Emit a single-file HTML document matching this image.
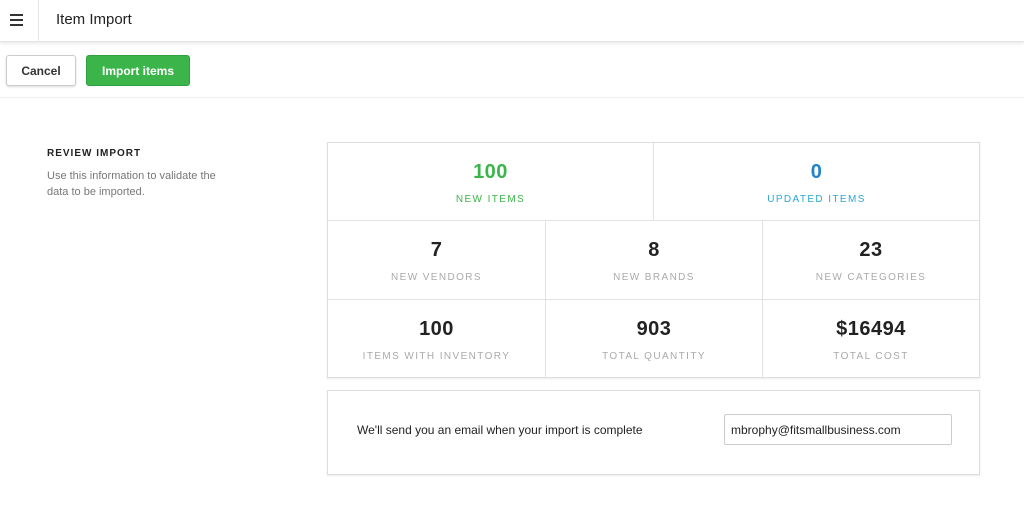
<!DOCTYPE html>
<html><head><style>
*{box-sizing:border-box;margin:0;padding:0}
body{width:1024px;height:505px;background:#fff;font-family:"Liberation Sans",sans-serif;position:relative;overflow:hidden;color:#222}
.top{position:absolute;left:0;top:0;width:1024px;height:42px;border-bottom:1px solid #e4e4e4;box-shadow:0 2px 3px rgba(0,0,0,.08)}
.hb{position:absolute;left:0;top:0;width:39px;height:42px;border-right:1px solid #e6e6e6}
.hb i{position:absolute;left:10px;width:13px;height:2px;background:#333}
.title{position:absolute;left:56px;top:11px;font-size:15px;color:#222}
.btn{position:absolute;top:55px;height:31px;border-radius:3px;font-size:12px;font-weight:bold;text-align:center;line-height:31px}
.cancel{left:6px;width:70px;border:1px solid #ccc;color:#333;background:#fff;box-shadow:0 1px 2px rgba(0,0,0,.15)}
.imp{left:86px;width:104px;background:#3bb54a;color:#fff;border:1px solid #2fa03f}
.sep{position:absolute;left:0;top:97px;width:1024px;height:1px;background:#eee}
.h{position:absolute;left:47px;top:148px;font-size:10px;font-weight:bold;letter-spacing:1px;color:#222}
.d{position:absolute;left:47px;top:168px;font-size:11px;line-height:16px;color:#777;width:192px}
.card{position:absolute;left:327px;top:142px;width:653px;height:236px;border:1px solid #ddd;box-shadow:0 1px 2px rgba(0,0,0,.08)}
.c{position:absolute;text-align:center;border-color:#e2e2e2;border-style:solid;border-width:0}
.n{font-size:20px;font-weight:bold;margin-top:18px;letter-spacing:.5px}
.l{font-size:10px;letter-spacing:1.4px;color:#aaa;margin-top:10px}
.email{position:absolute;left:327px;top:390px;width:653px;height:85px;border:1px solid #ddd;box-shadow:0 1px 2px rgba(0,0,0,.08)}
.et{position:absolute;left:29px;top:32px;font-size:12px;color:#222}
.inp{position:absolute;left:396px;top:23px;width:228px;height:31px;border:1px solid #ccc;border-radius:2px;font-size:12px;padding:8px 6px;color:#222}
</style></head><body>
<div class="top"><div class="hb"><i style="top:14px"></i><i style="top:19px"></i><i style="top:24px"></i></div><div class="title">Item Import</div></div>
<div class="btn cancel">Cancel</div><div class="btn imp">Import items</div>
<div class="sep"></div>
<div class="h">REVIEW IMPORT</div>
<div class="d">Use this information to validate the data to be imported.</div>
<div class="card">
<div class="c" style="left:0;top:0;width:326px;height:78px;border-right-width:1px;border-bottom-width:1px"><div class="n" style="color:#3bb54a">100</div><div class="l" style="color:#3bb54a">NEW ITEMS</div></div>
<div class="c" style="left:326px;top:0;width:325px;height:78px;border-bottom-width:1px"><div class="n" style="color:#1f84c6">0</div><div class="l" style="color:#2aa8d8">UPDATED ITEMS</div></div>
<div class="c" style="left:0;top:78px;width:218px;height:79px;border-right-width:1px;border-bottom-width:1px"><div class="n">7</div><div class="l">NEW VENDORS</div></div>
<div class="c" style="left:218px;top:78px;width:217px;height:79px;border-right-width:1px;border-bottom-width:1px"><div class="n">8</div><div class="l">NEW BRANDS</div></div>
<div class="c" style="left:435px;top:78px;width:216px;height:79px;border-bottom-width:1px"><div class="n">23</div><div class="l">NEW CATEGORIES</div></div>
<div class="c" style="left:0;top:157px;width:218px;height:77px;border-right-width:1px"><div class="n">100</div><div class="l">ITEMS WITH INVENTORY</div></div>
<div class="c" style="left:218px;top:157px;width:217px;height:77px;border-right-width:1px"><div class="n">903</div><div class="l">TOTAL QUANTITY</div></div>
<div class="c" style="left:435px;top:157px;width:216px;height:77px"><div class="n">$16494</div><div class="l">TOTAL COST</div></div>
</div>
<div class="email"><div class="et">We'll send you an email when your import is complete</div><div class="inp">mbrophy@fitsmallbusiness.com</div></div>
</body></html>
